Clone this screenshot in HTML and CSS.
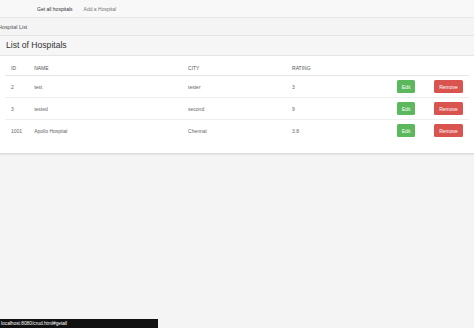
FILE: index.html
```html
<!DOCTYPE html>
<html>
<head>
<meta charset="utf-8">
<link rel="stylesheet" href="styles.css">
</head>
<body>
<nav class="navbar">
  <a class="nav-link active">Get all hospitals</a>
  <a class="nav-link">Add a Hospital</a>
</nav>
<div class="crumb">Hospital List</div>
<section class="card">
  <div class="card-header">List of Hospitals</div>
  <div class="card-body">
    <table class="table">
      <thead>
        <tr><th class="c-id">ID</th><th class="c-name">NAME</th><th class="c-city">CITY</th><th class="c-rating">RATING</th><th class="c-edit"></th><th class="c-remove"></th></tr>
      </thead>
      <tbody>
        <tr><td>2</td><td>test</td><td>tester</td><td>3</td><td><button class="btn btn-edit">Edit</button></td><td><button class="btn btn-remove">Remove</button></td></tr>
        <tr><td>3</td><td>tested</td><td>second</td><td>9</td><td><button class="btn btn-edit">Edit</button></td><td><button class="btn btn-remove">Remove</button></td></tr>
        <tr><td>1001</td><td>Apollo Hospital</td><td>Chennai</td><td>3.8</td><td><button class="btn btn-edit">Edit</button></td><td><button class="btn btn-remove">Remove</button></td></tr>
      </tbody>
    </table>
  </div>
</section>
<div class="status">localhost:8080/crud.html#getall</div>
</body>
</html>
```
FILE: styles.css
```css
html, body {
  margin: 0;
  padding: 0;
}
body {
  width: 474px;
  height: 328px;
  background: #f4f4f4;
  font-family: "Liberation Sans", Arial, sans-serif;
  color: #333;
  position: relative;
  overflow: hidden;
}
.navbar {
  height: 17px;
  background: #f8f8f8;
  border-bottom: 1px solid #e7e7e7;
  display: flex;
  align-items: center;
  padding-left: 37px;
  gap: 11px;
  font-size: 5px;
}
.nav-link { color: #777; }
.nav-link.active { color: #333; }
.crumb {
  height: 17px;
  line-height: 18px;
  font-size: 5.4px;
  color: #555;
  text-indent: -2px;
  background: #f4f4f4;
  border-bottom: 1px solid #e4e4e4;
}
.card {
  background: #fff;
  border-bottom: 1px solid #ddd;
  box-shadow: 0 1px 1px rgba(0,0,0,0.05);
}
.card-header {
  height: 19px;
  line-height: 19px;
  padding-left: 6px;
  font-size: 8.6px;
  color: #333;
  background: #f6f6f6;
  border-bottom: 1px solid #e6e6e6;
}
.card-body {
  padding: 4px 0 0 5px;
  height: 97px;
  box-sizing: border-box;
}
.table {
  width: 464px;
  border-collapse: collapse;
  font-size: 5px;
  color: #666;
}
.table th {
  text-align: left;
  font-weight: normal;
  color: #555;
  height: 15px;
  padding: 0 6px;
  border-bottom: 1px solid #e6e6e6;
}
.table td {
  height: 21px;
  padding: 0 6px;
  border-top: 1px solid #eee;
}
.table tbody tr:first-child td { border-top: none; }
.c-id { width: 10px; }
.c-name { width: 142px; }
.c-city { width: 92px; }
.c-rating { width: 93px; }
.c-edit { width: 25px; }
.btn {
  border: none;
  border-radius: 1.5px;
  color: #fff;
  font-family: inherit;
  font-size: 5px;
  height: 13px;
  padding: 0;
}
.btn-edit { background: #5cb85c; width: 18px; }
.btn-remove { background: #d9534f; width: 29px; }
.status {
  position: absolute;
  left: 0;
  bottom: 0;
  width: 157px;
  height: 9px;
  line-height: 9px;
  background: #111;
  color: #fff;
  font-size: 4.8px;
  padding-left: 1px;
}
```
